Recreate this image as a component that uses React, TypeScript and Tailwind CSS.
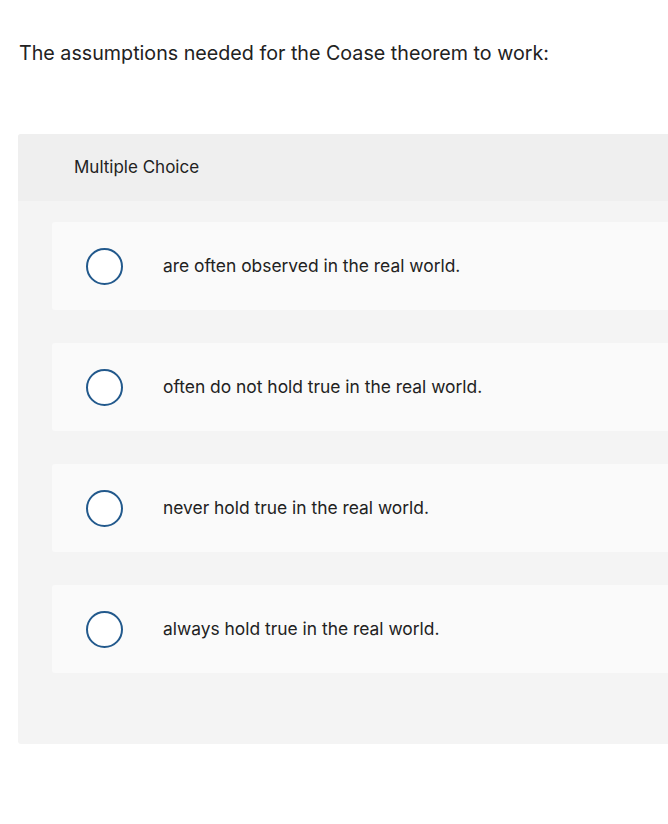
import React from "react";

const options = [
  "are often observed in the real world.",
  "often do not hold true in the real world.",
  "never hold true in the real world.",
  "always hold true in the real world.",
];

const App: React.FC = () => {
  return (
    <div className="w-full overflow-hidden bg-white font-['Inter','Liberation_Sans',sans-serif] text-[#222]">
      <div className="pt-[41px] pb-[80px]">
        <p className="pl-[19px] text-[19.7px] leading-[24px]">
          The assumptions needed for the Coase theorem to work:
        </p>

        {/* Панель вопроса */}
        <div className="ml-[18px] mt-[69px] w-[700px] rounded-[3px] bg-[#f4f4f4]">
          <div className="flex h-[67px] items-center rounded-t-[3px] bg-[#efefef] pl-[56px] text-[17px]">
            Multiple Choice
          </div>

          <div className="flex flex-col gap-[33px] pb-[71px] pl-[34px] pt-[21px]">
            {options.map((opt, i) => (
              <div
                key={i}
                className="flex h-[88px] items-center rounded-[3px] bg-[#fafafa] pl-[34px]"
              >
                <span className="h-[37px] w-[37px] shrink-0 rounded-full border-2 border-[#22598c] bg-white" />
                <span className="ml-[40px] text-[17.4px]">{opt}</span>
              </div>
            ))}
          </div>
        </div>
      </div>
    </div>
  );
};

export default App;
